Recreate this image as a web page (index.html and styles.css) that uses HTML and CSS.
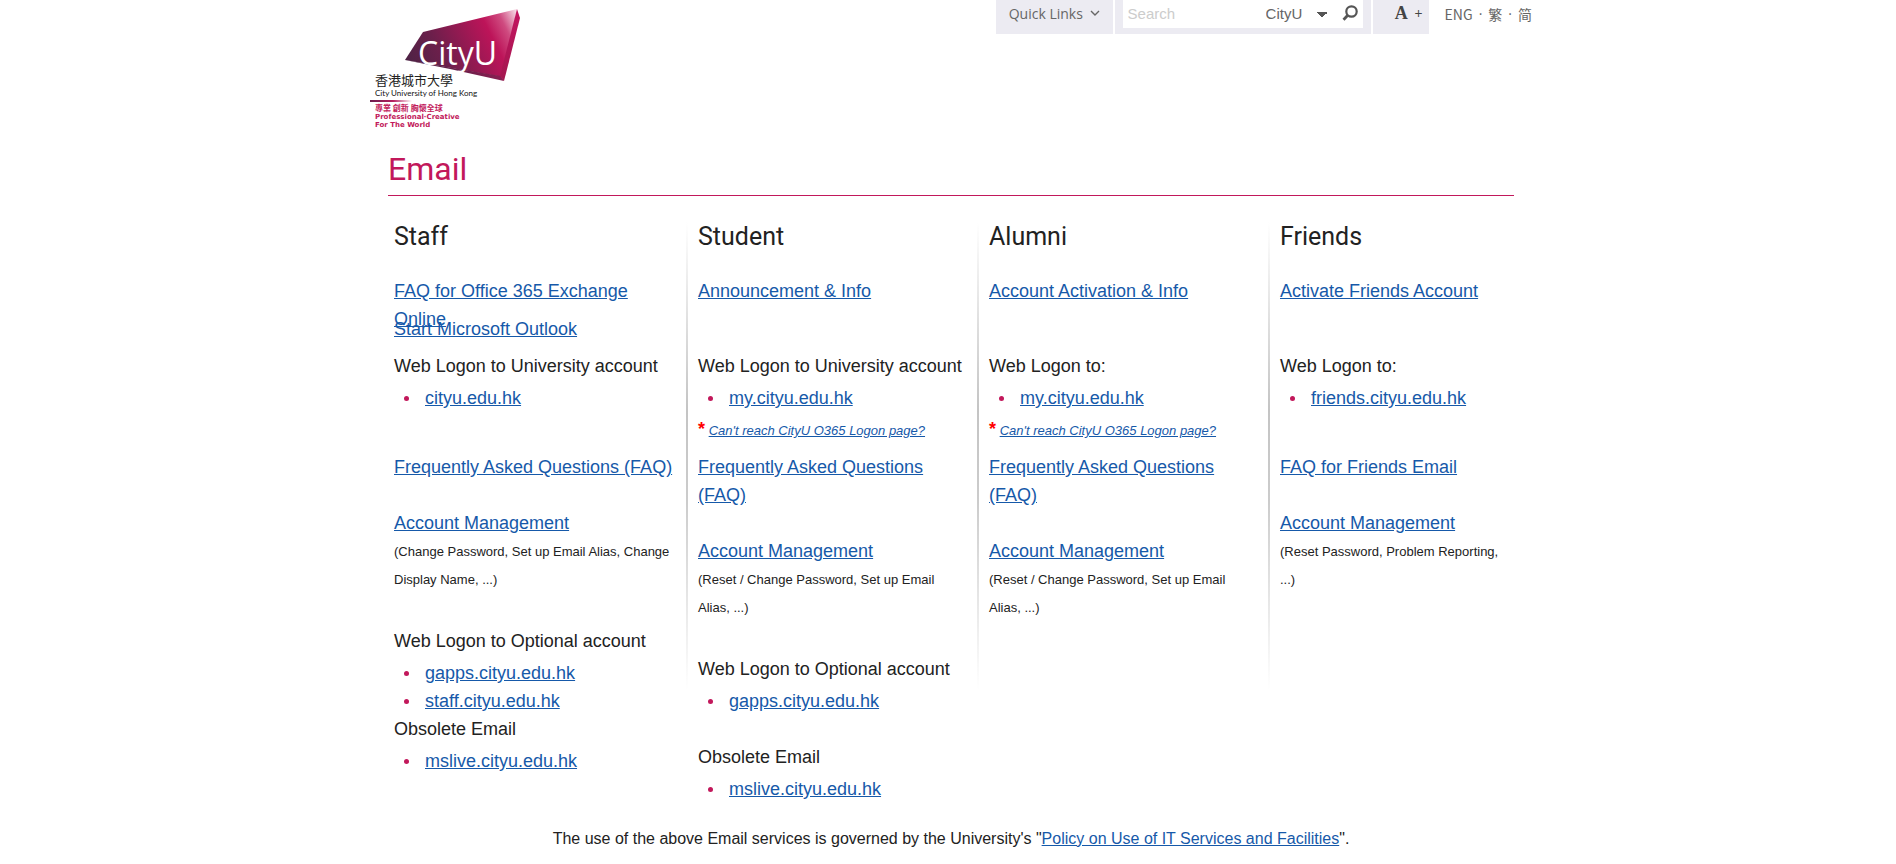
FILE: index.html
```
<!DOCTYPE html>
<html lang="en">
<head>
<meta charset="utf-8">
<meta name="viewport" content="width=device-width, initial-scale=1">
<title>Email - City University of Hong Kong</title>
<link rel="stylesheet" href="styles.css">
</head>

<body>
<div class="container">
    <header class="header">
        <a href="#" class="logo" aria-label="City University of Hong Kong">
            <svg width="170" height="140" viewBox="0 0 170 140">
                <defs>
                    <linearGradient id="gem" x1="45" y1="66" x2="158" y2="10" gradientUnits="userSpaceOnUse">
                        <stop offset="0" stop-color="#4a2344"/>
                        <stop offset="0.3" stop-color="#6c1f4b"/>
                        <stop offset="0.72" stop-color="#bd1459"/>
                        <stop offset="0.85" stop-color="#cf4b80"/>
                        <stop offset="1" stop-color="#fbeaf1"/>
                    </linearGradient>
                    <linearGradient id="side" x1="0" y1="0" x2="0" y2="1">
                        <stop offset="0" stop-color="#c41460"/>
                        <stop offset="1" stop-color="#a3174f"/>
                    </linearGradient>
                    <linearGradient id="base" x1="0" y1="0" x2="1" y2="0">
                        <stop offset="0" stop-color="#43203f"/>
                        <stop offset="1" stop-color="#8a1f52"/>
                    </linearGradient>
                    <linearGradient id="rule" x1="0" y1="0" x2="1" y2="0">
                        <stop offset="0" stop-color="#6b1c4c"/>
                        <stop offset="0.55" stop-color="#b5205f"/>
                        <stop offset="1" stop-color="#ffffff"/>
                    </linearGradient>
                </defs>
                <path d="M45 60 L63 32 L157 9 L143 77 Z" fill="url(#gem)"/>
                <path d="M45 60 L141 76 L144 81 L90 69 Z" fill="url(#base)"/>
                <path d="M157 9 L160 18 L144 81 L140 76 Z" fill="url(#side)"/>
                <text x="58" y="65" class="logo-mark">CityU</text>
                <text x="15" y="85" class="logo-zh">香港城市大學</text>
                <text x="15" y="96" class="logo-en">City University of Hong Kong</text>
                <rect x="10" y="100" width="42" height="2" fill="url(#rule)"/>
                <text x="15" y="111" class="logo-motto logo-motto-zh">專業 創新 胸懷全球</text>
                <text x="15" y="119" class="logo-motto">Professional·Creative</text>
                <text x="15" y="127" class="logo-motto">For The World</text>
            </svg>
        </a>
        <div class="tools">
            <button type="button" class="quick-links">Quick Links
                <svg width="10" height="6" viewBox="0 0 10 6"><path d="M1 1 L5 5 L9 1" fill="none" stroke="#666" stroke-width="1.4"/></svg>
            </button>
            <form class="search">
                <div class="search-box">
                    <input type="text" class="search-input" placeholder="Search" aria-label="Search">
                    <select class="search-scope" aria-label="Search scope">
                        <option>CityU</option>
                    </select>
                    <button type="button" class="search-button" aria-label="Search">
                        <svg width="16" height="16" viewBox="0 0 16 16"><circle cx="9.5" cy="6.5" r="5.2" fill="none" stroke="#555" stroke-width="2.2"/><path d="M6 10 L1.5 14.8" stroke="#555" stroke-width="2.8"/></svg>
                    </button>
                </div>
            </form>
            <button type="button" class="text-size"><b>A</b> <span>+</span></button>
            <nav class="languages">
                <a href="#">ENG</a><span>·</span><a href="#" lang="zh-Hant">繁</a><span>·</span><a href="#" lang="zh-Hans">简</a>
            </nav>
        </div>
    </header>

    <main class="content">
        <h1>Email</h1>
        <div class="columns">
            <section class="column">
                <h2>Staff</h2>
                <div class="intro">
                    <p class="intro-first"><a href="#">FAQ for Office 365 Exchange Online</a></p>
                    <p><a href="#">Start Microsoft Outlook</a></p>
                </div>
                <div class="logon">
                    <p>Web Logon to University account</p>
                    <ul><li><a href="#">cityu.edu.hk</a></li></ul>
                </div>
                <p class="faq"><a href="#">Frequently Asked Questions (FAQ)</a></p>
                <p><a href="#">Account Management</a></p>
                <p class="note">(Change Password, Set up Email Alias, Change Display Name, ...)</p>
                <p>Web Logon to Optional account</p>
                <ul>
                    <li><a href="#">gapps.cityu.edu.hk</a></li>
                    <li><a href="#">staff.cityu.edu.hk</a></li>
                </ul>
                <p>Obsolete Email</p>
                <ul><li><a href="#">mslive.cityu.edu.hk</a></li></ul>
            </section>

            <section class="column">
                <h2>Student</h2>
                <div class="intro">
                    <p><a href="#">Announcement &amp; Info</a></p>
                </div>
                <div class="logon">
                    <p>Web Logon to University account</p>
                    <ul><li><a href="#">my.cityu.edu.hk</a></li></ul>
                    <p class="hint"><b>*</b> <a href="#">Can't reach CityU O365 Logon page?</a></p>
                </div>
                <p class="faq"><a href="#">Frequently Asked Questions (FAQ)</a></p>
                <p><a href="#">Account Management</a></p>
                <p class="note">(Reset / Change Password, Set up Email Alias, ...)</p>
                <p>Web Logon to Optional account</p>
                <ul class="spaced"><li><a href="#">gapps.cityu.edu.hk</a></li></ul>
                <p>Obsolete Email</p>
                <ul><li><a href="#">mslive.cityu.edu.hk</a></li></ul>
            </section>

            <section class="column">
                <h2>Alumni</h2>
                <div class="intro">
                    <p><a href="#">Account Activation &amp; Info</a></p>
                </div>
                <div class="logon">
                    <p>Web Logon to:</p>
                    <ul><li><a href="#">my.cityu.edu.hk</a></li></ul>
                    <p class="hint"><b>*</b> <a href="#">Can't reach CityU O365 Logon page?</a></p>
                </div>
                <p class="faq"><a href="#">Frequently Asked Questions (FAQ)</a></p>
                <p><a href="#">Account Management</a></p>
                <p class="note">(Reset / Change Password, Set up Email Alias, ...)</p>
            </section>

            <section class="column">
                <h2>Friends</h2>
                <div class="intro">
                    <p><a href="#">Activate Friends Account</a></p>
                </div>
                <div class="logon">
                    <p>Web Logon to:</p>
                    <ul><li><a href="#">friends.cityu.edu.hk</a></li></ul>
                </div>
                <p class="faq"><a href="#">FAQ for Friends Email</a></p>
                <p><a href="#">Account Management</a></p>
                <p class="note">(Reset Password, Problem Reporting, ...)</p>
            </section>
        </div>
        <p class="policy">The use of the above Email services is governed by the University's "<a href="#">Policy on Use of IT Services and Facilities</a>".</p>
    </main>
</div>
</body>
</html>
```
FILE: styles.css
```
* {
    box-sizing: border-box;
}

body {
    margin: 0;
    background: #fff;
    color: #222;
    font-family: "Liberation Sans", Arial, sans-serif;
    font-size: 18px;
    line-height: 28px;
}

h1, h2, p, ul {
    margin: 0;
    font-weight: normal;
}

a {
    color: #1659a9;
}

button, input, select {
    border: 0;
    padding: 0;
    margin: 0;
    background: none;
    color: #666;
    font-family: inherit;
}

.container {
    max-width: 1176px;
    margin: 0 auto;
}

/* header */
.header {
    display: flex;
    justify-content: space-between;
    align-items: flex-start;
    padding-right: 3px;
}

.logo svg {
    display: block;
}

.logo-mark {
    font: 32px "Open Sans", sans-serif;
    fill: #fff;
}

.logo-zh {
    font: 13px "Noto Sans CJK TC", sans-serif;
    fill: #222;
}

.logo-en {
    font: 8px Lato, sans-serif;
    fill: #111;
}

.logo-motto {
    font: bold 7px "DejaVu Sans", sans-serif;
    fill: #c2185b;
}

.logo-motto-zh {
    font-family: "Noto Sans CJK TC", sans-serif;
    font-size: 8px;
}

.tools {
    display: flex;
    gap: 2px;
    color: #666;
    font-family: "Open Sans", sans-serif;
    font-size: 14px;
}

.quick-links,
.search,
.text-size {
    height: 34px;
    background: #ecebf2;
}

.quick-links {
    width: 117px;
    padding-bottom: 8px;
    font-size: 14px;
}

.quick-links svg {
    margin: 0 0 3px 3px;
}

.search {
    padding: 0 8px;
}

.search-box {
    display: flex;
    align-items: center;
    width: 240px;
    height: 28px;
    padding: 0 5px 2px;
    background: #fff;
    font-family: "Liberation Sans", Arial, sans-serif;
}

.search-input {
    flex: 1;
    min-width: 0;
    font-size: 15px;
}

.search-input::placeholder {
    color: #ccc;
}

.search-scope {
    appearance: none;
    width: 62px;
    margin-right: 14px;
    font-size: 15px;
    background: linear-gradient(to bottom left, #555 50%, transparent 50%) right 6px bottom 4px / 6px 6px no-repeat,
                linear-gradient(to bottom right, #555 50%, transparent 50%) right bottom 4px / 6px 6px no-repeat;
}

.search-button {
    height: 16px;
}

.search-button svg {
    display: block;
}

.text-size {
    width: 56px;
    padding: 0 0 8px 16px;
    font-size: 14px;
    color: #444;
}

.text-size b {
    margin-right: 3px;
    font: bold 18px "Liberation Serif", serif;
}

.languages {
    display: flex;
    gap: 6px;
    padding: 0 1px 0 14px;
    line-height: 28px;
    font-family: "Noto Sans CJK TC", sans-serif;
    font-size: 14px;
}

.languages span {
    font-family: "Open Sans", sans-serif;
}

.languages a {
    color: #666;
    text-decoration: none;
}

/* content */
.content {
    padding: 9px 22px 0 28px;
}

h1 {
    margin-bottom: 26px;
    padding-bottom: 6px;
    border-bottom: 1px solid #c2185b;
    color: #c2185b;
    font: 32px/40px Roboto, sans-serif;
}

.columns {
    display: grid;
    grid-template-columns: 298fr 291fr 291fr 246fr;
    align-items: start;
}

.column {
    min-height: 468px;
    padding: 0 12px;
    background: linear-gradient(#fff, #c4c4c4 40%, #ccc 60%, #fff) 0 0 / 2px 468px no-repeat;
}

.column:first-child {
    padding: 0 6px;
    background: none;
}

h2 {
    margin-bottom: 25px;
    font: 25px/30px Roboto, sans-serif;
}

.intro {
    height: 75px;
}

.intro-first {
    height: 38px;
}

.logon {
    height: 101px;
}

ul {
    padding: 4px 0 0 31px;
    list-style: none;
}

ul.spaced {
    padding-bottom: 28px;
}

li {
    position: relative;
    height: 28px;
}

li::before {
    content: "";
    position: absolute;
    left: -21px;
    top: 12px;
    width: 5px;
    height: 5px;
    border-radius: 50%;
    background: #c2185b;
}

.hint {
    margin-top: 5px;
    font: italic 13px/28px "Liberation Sans", Arial, sans-serif;
}

.hint b {
    color: #f00;
    font: bold 18px/20px "Liberation Sans", Arial, sans-serif;
}

.faq {
    margin-bottom: 28px;
}

.note {
    margin: 1px 0 33px;
    font-size: 13px;
}

.policy {
    margin-top: 22px;
    font-size: 16px;
    text-align: center;
}
```
